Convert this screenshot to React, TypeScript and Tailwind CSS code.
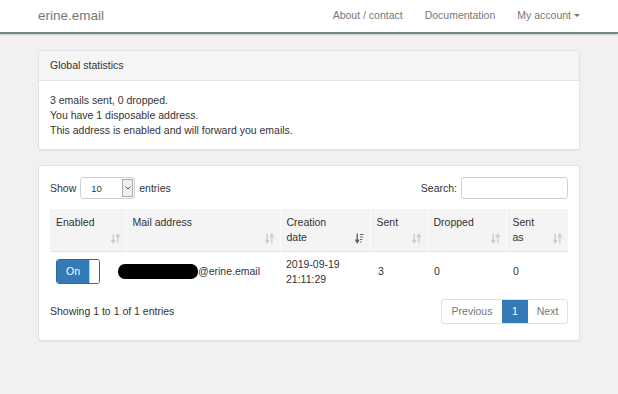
import React from "react";

function SortIcon({ active = false }: { active?: boolean }) {
  if (active) {
    return (
      <svg width="9" height="11" viewBox="0 0 9 11" className="text-[#666]">
        <path d="M2.2 0.5v8.5M0.4 6.6l1.8 3 1.8-3" stroke="currentColor" strokeWidth="1.4" fill="none" />
        <path d="M5 1.5h3.6M5 4h2.9M5 6.5h2.2M5 9h1.4" stroke="currentColor" strokeWidth="1.1" />
      </svg>
    );
  }
  return (
    <svg width="9" height="11" viewBox="0 0 9 11" className="text-[#cdcdcd]">
      <path d="M2.2 0.8v8.8M0.4 6.8l1.8 3 1.8-3" stroke="currentColor" strokeWidth="1.4" fill="none" />
      <path d="M6.8 10.2v-8.8M5 4.2l1.8-3 1.8 3" stroke="currentColor" strokeWidth="1.4" fill="none" />
    </svg>
  );
}

const headers: { label: React.ReactNode; width: string; active?: boolean }[] = [
  { label: "Enabled", width: "w-[76px]" },
  { label: "Mail address", width: "w-[154px]" },
  { label: <>Creation<br />date</>, width: "w-[90px]", active: true },
  { label: "Sent", width: "w-[57px]" },
  { label: "Dropped", width: "w-[79px]" },
  { label: <>Sent<br />as</>, width: "w-[62px]" },
];

export default function App() {
  return (
    <div className="min-h-[394px] bg-[#f2f0f0] font-['Liberation_Sans',Arial,sans-serif] text-[10.5px] leading-[15px] text-[#333]">
      <nav className="h-[34px] border-b-2 border-[#71868a] bg-white shadow-[0_1px_2px_rgba(0,0,0,0.15)]">
        <div className="mx-auto flex h-full w-[542px] items-center justify-between pb-[1px]">
          <span className="text-[13.5px] text-[#777]">erine.email</span>
          <div className="flex items-center gap-[22px] text-[#777]">
            <span>About / contact</span>
            <span>Documentation</span>
            <span className="flex items-center gap-[3px]">
              My account
              <span className="inline-block h-0 w-0 border-x-[3px] border-t-[3px] border-x-transparent border-t-[#777]" />
            </span>
          </div>
        </div>
      </nav>

      <main className="mx-auto w-[542px] pt-[16px]">
        <section className="rounded-[3px] border border-[#e2e2e2] bg-white shadow-[0_1px_1px_rgba(0,0,0,0.05)]">
          <div className="flex h-[30px] items-center rounded-t-[3px] border-b border-[#e2e2e2] bg-[#f5f5f5] px-[11px]">
            Global statistics
          </div>
          <div className="px-[11px] pb-[11px] pt-[12px]">
            <p>3 emails sent, 0 dropped.</p>
            <p>You have 1 disposable address.</p>
            <p>This address is enabled and will forward you emails.</p>
          </div>
        </section>

        <section className="mt-[15px] rounded-[3px] border border-[#e2e2e2] bg-white px-[11px] pb-[16px] pt-[11px] shadow-[0_1px_1px_rgba(0,0,0,0.05)]">
          <div className="flex items-center justify-between">
            <div className="flex items-center">
              <span>Show</span>
              <div className="ml-[4px] flex h-[22px] w-[55px] items-center justify-between rounded-[3px] border border-[#cfcfcf] pl-[10px] pr-[1px] text-[9.5px]">
                <span>10</span>
                <span className="flex h-[18px] w-[11px] items-center justify-center border border-[#aaa] bg-[#f0f0f0]">
                  <svg width="6" height="4" viewBox="0 0 6 4">
                    <path d="M0.5 0.5L3 3l2.5-2.5" stroke="#555" fill="none" strokeWidth="1" />
                  </svg>
                </span>
              </div>
              <span className="ml-[4px]">entries</span>
            </div>
            <div className="flex items-center">
              <span>Search:</span>
              <div className="ml-[4px] h-[22px] w-[107px] rounded-[3px] border border-[#cfcfcf] bg-white" />
            </div>
          </div>

          <table className="mt-[10px] w-[518px] table-fixed border-collapse">
            <thead>
              <tr className="border-b border-[#e3e3e3] bg-[#f4f4f4]">
                {headers.map((h, i) => (
                  <th
                    key={i}
                    className={`${h.width} h-[42px] border-r border-[#fbfbfb] px-[6px] py-[6px] text-left align-top font-normal last:border-r-0`}
                  >
                    <div className="relative h-[30px]">
                      <div>{h.label}</div>
                      <span className="absolute bottom-[1px] right-0">
                        <SortIcon active={h.active} />
                      </span>
                    </div>
                  </th>
                ))}
              </tr>
            </thead>
            <tbody>
              <tr>
                <td className="h-[40px] px-[6px] align-middle">
                  <div className="flex h-[25px] w-[44px] overflow-hidden rounded-[3px] border border-[#2e6da4]">
                    <div className="flex w-[32px] items-center justify-center bg-[#337ab7] text-white">On</div>
                    <div className="flex-1 border-l border-[#ccc] bg-white" />
                  </div>
                </td>
                <td className="px-[6px] align-middle">
                  <div className="flex items-center">
                    <span className="ml-[-14px] h-[15px] w-[80px] rounded-[7px] bg-black" />
                    <span>@erine.email</span>
                  </div>
                </td>
                <td className="px-[6px] align-middle">
                  2019-09-19
                  <br />
                  21:11:29
                </td>
                <td className="px-[8px] align-middle">3</td>
                <td className="px-[7px] align-middle">0</td>
                <td className="px-[7px] align-middle">0</td>
              </tr>
            </tbody>
          </table>

          <div className="mt-[7px] flex items-center justify-between">
            <span>Showing 1 to 1 of 1 entries</span>
            <div className="flex h-[25px] overflow-hidden rounded-[3px] border border-[#e0e0e0]">
              <span className="flex w-[60px] items-center justify-center text-[#777]">Previous</span>
              <span className="flex w-[26px] items-center justify-center bg-[#337ab7] text-white">1</span>
              <span className="flex w-[39px] items-center justify-center text-[#777]">Next</span>
            </div>
          </div>
        </section>
      </main>
    </div>
  );
}
